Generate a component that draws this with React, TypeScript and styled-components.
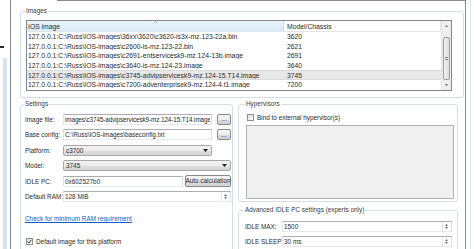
import React from "react";
import styled, { createGlobalStyle } from "styled-components";

const GlobalStyle = createGlobalStyle`
  html, body {
    margin: 0;
    padding: 0;
    background: #fff;
  }
  body {
    font-family: "Liberation Sans", Arial, sans-serif;
    font-size: 6.4px;
    color: #2b2b2b;
  }
`;

const Screen = styled.div`
  display: flex;
  width: 474px;
  height: 249px;
  overflow: hidden;
  background: #fff;
`;

const LeftRail = styled.div`
  width: 10px;
  flex: none;
  display: flex;
  flex-direction: column;
  padding-top: 46px;
  box-sizing: border-box;
`;

const Tick = styled.div`
  width: 4px;
  height: 2px;
  background: #2a2a2a;
`;

const Stripe = styled.div`
  flex: 1;
  width: 4px;
  margin: 10px 0 0 3px;
  background: #d4e2f1;
`;

const RightRail = styled.div`
  flex: 1;
  display: flex;
  justify-content: center;
`;

const RailLine = styled.div`
  width: 1px;
  background: #dbe6f2;
`;

const TabWidget = styled.div`
  width: 456px;
  flex: none;
  display: flex;
  flex-direction: column;
`;

const TabBar = styled.div`
  height: 3px;
  display: flex;
`;

const Tab = styled.div<{ $w: number; $bg: string; $active?: boolean }>`
  width: ${(p) => p.$w}px;
  background: ${(p) => p.$bg};
  border-left: 1px solid #898c95;
  border-bottom: ${(p) => (p.$active ? "none" : "1px solid #898c95")};
  box-sizing: border-box;
`;

const TabRest = styled.div`
  flex: 1;
  border-bottom: 1px solid #898c95;
`;

const Panel = styled.div`
  flex: 1;
  border-left: 1px solid #898c95;
  border-right: 1px solid #898c95;
  background: #fff;
  padding: 6px 2px 0 9px;
`;

const Group = styled.fieldset<{ $w: number; $pad: string; $mt?: number }>`
  margin: ${(p) => p.$mt ?? 0}px 0 0 0;
  min-width: 0;
  box-sizing: border-box;
  width: ${(p) => p.$w}px;
  padding: ${(p) => p.$pad};
  border: 1px solid #d5dfe5;
  border-radius: 3px;
`;

const Legend = styled.legend<{ $ml?: number }>`
  padding: 0 1px;
  margin-left: ${(p) => p.$ml ?? -1}px;
  line-height: 8px;
  font-size: 6.4px;
  color: #3a3a3a;
`;

/* ---------- image list ---------- */

const ListView = styled.div`
  width: 426px;
  height: 71px;
  box-sizing: border-box;
  border: 1px solid #828790;
  display: flex;
  font-size: 6.8px;
`;

const ListBody = styled.div`
  flex: 1;
  display: flex;
  flex-direction: column;
`;

const HeaderRow = styled.div`
  display: flex;
  height: 11px;
`;

const HeaderCell = styled.div<{ $w?: number; $sorted?: boolean }>`
  position: relative;
  ${(p) => (p.$w ? `width: ${p.$w}px;` : "flex: 1;")}
  box-sizing: border-box;
  padding-left: ${(p) => (p.$sorted ? 1 : 3)}px;
  line-height: 11px;
  white-space: nowrap;
  background: ${(p) =>
    p.$sorted ? "linear-gradient(#eaf5fc, #d9ebf7)" : "#fff"};
  border-right: 1px solid ${(p) => (p.$sorted ? "#c0dcee" : "#e5e5e5")};
  border-bottom: 1px solid #e5e5e5;
`;

const SortMark = styled.svg`
  position: absolute;
  top: 0;
  left: 126px;
`;

const Row = styled.div<{ $selected?: boolean }>`
  display: flex;
  height: 9.6px;
  align-items: center;
  box-sizing: border-box;
  background: ${(p) => (p.$selected ? "#e8e8e8" : "transparent")};
  border-top: 1px solid ${(p) => (p.$selected ? "#dadada" : "transparent")};
  border-bottom: 1px solid ${(p) => (p.$selected ? "#dadada" : "transparent")};
`;

const Cell = styled.div<{ $w?: number }>`
  ${(p) => (p.$w ? `width: ${p.$w}px;` : "flex: 1;")}
  padding-left: ${(p) => (p.$w ? 1 : 3)}px;
  box-sizing: border-box;
  white-space: nowrap;
  overflow: hidden;
`;

const ScrollBar = styled.div`
  width: 9px;
  display: flex;
  flex-direction: column;
  background: #eeeeee;
  border-left: 1px solid #e6e6e6;
`;

const ScrollArrow = styled.div<{ $h: number }>`
  height: ${(p) => p.$h}px;
  display: flex;
  align-items: center;
  justify-content: center;
`;

const ScrollTrack = styled.div`
  flex: 1;
  display: flex;
  flex-direction: column;
  padding: 6px 0 0 0;
`;

const Thumb = styled.div`
  flex: 1;
  margin: 0 1px;
  border: 1px solid #9c9c9c;
  border-radius: 2px;
  background: linear-gradient(90deg, #f2f2f2, #dcdcdc);
  display: flex;
  align-items: center;
  justify-content: center;
`;

const Grip = styled.div`
  width: 3px;
  height: 3px;
  box-sizing: border-box;
  border-top: 1px solid #888;
  border-bottom: 1px solid #888;
`;

/* ---------- lower part ---------- */

const Lower = styled.div`
  display: flex;
  gap: 5px;
  margin-top: 2px;
  align-items: flex-start;
`;

const Column = styled.div`
  width: 220px;
  display: flex;
  flex-direction: column;
`;

const FormRow = styled.div`
  display: flex;
  align-items: center;
  height: 15.5px;
`;

const FormRowTight = styled(FormRow)`
  height: 15px;
`;

const FieldLabel = styled.div<{ $w: number }>`
  width: ${(p) => p.$w}px;
  flex: none;
  white-space: nowrap;
`;

const TextBox = styled.div<{ $w: number }>`
  width: ${(p) => p.$w}px;
  height: 11px;
  flex: none;
  box-sizing: border-box;
  border: 1px solid;
  border-color: #abadb3 #dbdfe6 #e3e9ef #e2e3ea;
  padding: 0 1px;
  line-height: 9px;
  white-space: nowrap;
  overflow: hidden;
  display: flex;
  align-items: center;
`;

const BoxText = styled.span<{ $tight?: boolean }>`
  flex: 1;
  overflow: hidden;
  letter-spacing: ${(p) => (p.$tight ? "-0.12px" : "normal")};
`;

const Win7Button = styled.div<{ $w: number; $h: number; $ml: number }>`
  width: ${(p) => p.$w}px;
  height: ${(p) => p.$h}px;
  margin-left: ${(p) => p.$ml}px;
  flex: none;
  box-sizing: border-box;
  border: 1px solid #8a8a8a;
  border-radius: 2px;
  background: linear-gradient(#f4f4f4 0%, #ececec 50%, #dedede 51%, #d2d2d2 100%);
  display: flex;
  align-items: center;
  justify-content: center;
  white-space: nowrap;
  font-size: 6.4px;
  line-height: 8px;
`;

const Combo = styled.div<{ $w: number }>`
  width: ${(p) => p.$w}px;
  height: 11px;
  flex: none;
  box-sizing: border-box;
  border: 1px solid #a8a8a8;
  border-radius: 2px;
  background: linear-gradient(#f2f2f2 0%, #ebebeb 50%, #dddddd 51%, #d6d6d6 100%);
  display: flex;
  align-items: center;
  justify-content: space-between;
  padding: 0 3px 0 2px;
`;

const SpinKnobs = styled.div`
  width: 7px;
  height: 9px;
  display: flex;
  flex-direction: column;
  justify-content: center;
  align-items: center;
  gap: 1px;
  border-left: 1px solid #e3e3e3;
`;

const Link = styled.a`
  display: block;
  margin-top: 10.5px;
  line-height: 8px;
  color: #0b5fc6;
  text-decoration: underline;
  white-space: nowrap;
`;

const CheckRow = styled.div<{ $mt: number }>`
  display: flex;
  align-items: center;
  gap: 3px;
  height: 8px;
  margin-top: ${(p) => p.$mt}px;
  white-space: nowrap;
`;

const CheckBox = styled.div`
  width: 7px;
  height: 7px;
  margin-left: 1px;
  box-sizing: border-box;
  border: 1px solid #8f8f8f;
  background: linear-gradient(135deg, #dedede, #fbfbfb);
  display: flex;
  align-items: center;
  justify-content: center;
`;

const HyperList = styled.div`
  height: 74px;
  margin-top: 4px;
  box-sizing: border-box;
  border: 1px solid #adb2b5;
  background: #f0f0f0;
`;

const Arrow = ({ up }: { up?: boolean }) => (
  <svg width="5" height="3" viewBox="0 0 5 3">
    <path d={up ? "M0 3 L2.5 0 L5 3 Z" : "M0 0 L5 0 L2.5 3 Z"} fill="#222" />
  </svg>
);

const SmallArrow = ({ up }: { up?: boolean }) => (
  <svg width="3" height="2" viewBox="0 0 3 2">
    <path d={up ? "M0 2 L1.5 0 L3 2 Z" : "M0 0 L3 0 L1.5 2 Z"} fill="#6a6a6a" />
  </svg>
);

const Spin = () => (
  <SpinKnobs>
    <SmallArrow up />
    <SmallArrow />
  </SpinKnobs>
);

const images = [
  ["127.0.0.1:C:\\Russ\\IOS-images\\36xx\\3620\\c3620-is3x-mz.123-22a.bin", "3620"],
  ["127.0.0.1:C:\\Russ\\IOS-images\\c2600-is-mz.123-22.bin", "2621"],
  ["127.0.0.1:C:\\Russ\\IOS-images\\c2691-entservicesk9-mz.124-13b.image", "2691"],
  ["127.0.0.1:C:\\Russ\\IOS-images\\c3640-is-mz.124-23.image", "3640"],
  ["127.0.0.1:C:\\Russ\\IOS-images\\c3745-advipservicesk9-mz.124-15.T14.image", "3745"],
  ["127.0.0.1:C:\\Russ\\IOS-images\\c7200-adventerprisek9-mz.124-4.t1.image", "7200"],
];

export default function App() {
  return (
    <Screen>
      <GlobalStyle />
      <LeftRail>
        <Tick />
        <Stripe />
      </LeftRail>
      <TabWidget>
        <TabBar>
          <Tab $w={47} $bg="#fff" $active />
          <Tab $w={41} $bg="#d7d7d7" />
          <Tab $w={52} $bg="#ededed" />
          <TabRest />
        </TabBar>
        <Panel>
          <Group $w={444} $pad="5px 10px 6px 5px">
            <Legend>Images</Legend>
            <ListView>
              <ListBody>
                <HeaderRow>
                  <HeaderCell $w={257} $sorted>
                    IOS image
                    <SortMark width="5" height="3" viewBox="0 0 5 3">
                      <path d="M0.5 2.5 L2.5 0.5 L4.5 2.5" stroke="#8aa3b8" strokeWidth="0.8" fill="none" />
                    </SortMark>
                  </HeaderCell>
                  <HeaderCell>Model/Chassis</HeaderCell>
                </HeaderRow>
                {images.map(([path, model], i) => (
                  <Row key={path} $selected={i === 4}>
                    <Cell $w={257}>{path}</Cell>
                    <Cell>{model}</Cell>
                  </Row>
                ))}
              </ListBody>
              <ScrollBar>
                <ScrollArrow $h={10}>
                  <SmallArrow up />
                </ScrollArrow>
                <ScrollTrack>
                  <Thumb>
                    <Grip />
                  </Thumb>
                </ScrollTrack>
                <ScrollArrow $h={10}>
                  <SmallArrow />
                </ScrollArrow>
              </ScrollBar>
            </ListView>
          </Group>

          <Lower>
            <Group $w={213} $pad="3.5px 0 20px 4px">
              <Legend>Settings</Legend>
              <FormRow>
                <FieldLabel $w={38}>Image file:</FieldLabel>
                <TextBox $w={149}>
                  <BoxText $tight>images\c3745-advipservicesk9-mz.124-15.T14.image</BoxText>
                </TextBox>
                <Win7Button $w={14} $h={11} $ml={5}>...</Win7Button>
              </FormRow>
              <FormRow>
                <FieldLabel $w={38}>Base config:</FieldLabel>
                <TextBox $w={149}>
                  <BoxText>C:\Russ\IOS-images\baseconfig.txt</BoxText>
                </TextBox>
                <Win7Button $w={14} $h={11} $ml={5}>...</Win7Button>
              </FormRow>
              <FormRow>
                <FieldLabel $w={38}>Platform:</FieldLabel>
                <Combo $w={149}>
                  <span>c3700</span>
                  <Arrow />
                </Combo>
              </FormRow>
              <FormRow>
                <FieldLabel $w={38}>Model:</FieldLabel>
                <Combo $w={168}>
                  <span>3745</span>
                  <Arrow />
                </Combo>
              </FormRow>
              <FormRow>
                <FieldLabel $w={38}>IDLE PC:</FieldLabel>
                <TextBox $w={120}>
                  <BoxText>0x602527b0</BoxText>
                </TextBox>
                <Win7Button $w={46} $h={12} $ml={2}>Auto calculation</Win7Button>
              </FormRow>
              <FormRow>
                <FieldLabel $w={38}>Default RAM:</FieldLabel>
                <TextBox $w={168}>
                  <BoxText>128 MiB</BoxText>
                  <Spin />
                </TextBox>
              </FormRow>
              <Link>Check for minimum RAM requirement</Link>
              <CheckRow $mt={14}>
                <CheckBox>
                  <svg width="5" height="5" viewBox="0 0 5 5">
                    <path d="M0.6 2.6 L2 4 L4.4 0.8" stroke="#2c3e63" strokeWidth="1" fill="none" />
                  </svg>
                </CheckBox>
                Default image for this platform
              </CheckRow>
            </Group>

            <Column>
              <Group $w={220} $pad="5px 3px 2px 7px">
                <Legend>Hypervisors</Legend>
                <CheckRow $mt={0}>
                  <CheckBox />
                  Bind to external hypervisor(s)
                </CheckRow>
                <HyperList />
              </Group>
              <Group $w={220} $mt={4} $pad="4.5px 4px 20px 6px">
                <Legend>Advanced IDLE PC settings (experts only)</Legend>
                <FormRowTight>
                  <FieldLabel $w={37}>IDLE MAX:</FieldLabel>
                  <TextBox $w={170}>
                    <BoxText>1500</BoxText>
                    <Spin />
                  </TextBox>
                </FormRowTight>
                <FormRowTight>
                  <FieldLabel $w={37}>IDLE SLEEP:</FieldLabel>
                  <TextBox $w={170}>
                    <BoxText>30 ms</BoxText>
                    <Spin />
                  </TextBox>
                </FormRowTight>
              </Group>
            </Column>
          </Lower>
        </Panel>
      </TabWidget>
      <RightRail>
        <RailLine />
      </RightRail>
    </Screen>
  );
}
